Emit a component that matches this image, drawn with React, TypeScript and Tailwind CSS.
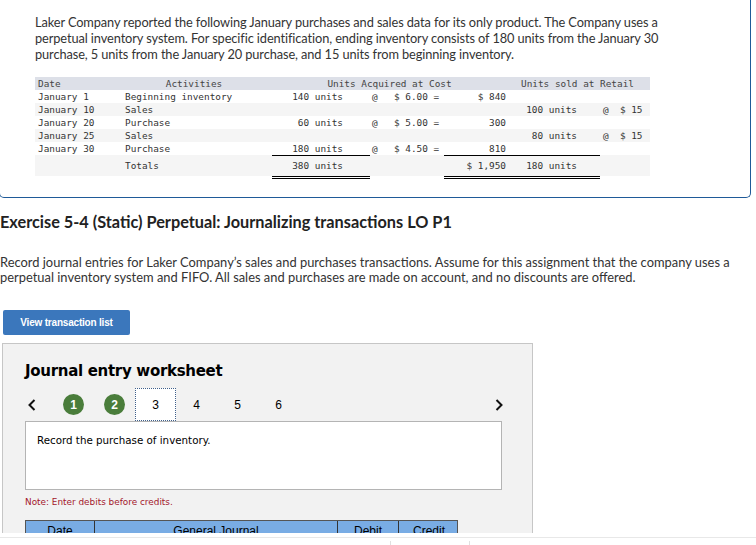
import React from "react";

// Purchases / sales data shown in the problem statement
type Row = {
  date: string;
  activity: string;
  qty?: string;
  price?: string;
  cost?: string;
  sold?: string;
  retail?: string;
  stripe?: boolean;
  underline?: boolean;
};

const rows: Row[] = [
  { date: "January 1", activity: "Beginning inventory", qty: "140 units", price: "$ 6.00 =", cost: "$ 840" },
  { date: "January 10", activity: "Sales", sold: "100 units", retail: "$ 15", stripe: true },
  { date: "January 20", activity: "Purchase", qty: "60 units", price: "$ 5.00 =", cost: "300" },
  { date: "January 25", activity: "Sales", sold: "80 units", retail: "$ 15", stripe: true },
  { date: "January 30", activity: "Purchase", qty: "180 units", price: "$ 4.50 =", cost: "810", underline: true },
];

const cols = "grid grid-cols-[90px_147px_98px_21px_53px_67px_89px_50px]";

function DataTable() {
  return (
    <div className="w-[615px] font-['DejaVu_Sans_Mono',monospace] text-[9.4px] text-[#333] leading-[13px]">
      <div className={`${cols} h-[13px] bg-[#dde0e8] text-[#444]`}>
        <div className="pl-[3px]">Date</div>
        <div className="text-center pr-[9px]">Activities</div>
        <div className="col-span-4 text-center pr-[4px]">Units Acquired at Cost</div>
        <div className="col-span-2 text-center pr-[6px]">Units sold at Retail</div>
      </div>
      {rows.map((r) => (
        <div key={r.date} className={`${cols} h-[13px] ${r.stripe ? "bg-[#f5f5f5]" : "bg-white"}`}>
          <div className="pl-[3px] whitespace-pre">{r.date}</div>
          <div className="whitespace-pre">{r.activity}</div>
          <div className={`text-right pr-[27px] ${r.underline ? "border-b border-black" : ""}`}>{r.qty}</div>
          <div className="pl-[2px]">{r.qty ? "@" : ""}</div>
          <div className="pl-[3px] whitespace-pre">{r.price}</div>
          <div className={`text-right pr-[5px] ${r.underline ? "border-b border-black" : ""}`}>{r.cost}</div>
          <div className={`text-right pr-[23px] ${r.underline ? "border-b border-black" : ""}`}>{r.sold}</div>
          <div className="pl-[3px] whitespace-pre">{r.retail ? `@  ${r.retail}` : ""}</div>
        </div>
      ))}
      <div className={`${cols} h-[21px] bg-[#f5f5f5] leading-[21px]`}>
        <div />
        <div>Totals</div>
        <div className="text-right pr-[27px] border-b-[3px] border-double border-black">380 units</div>
        <div />
        <div />
        <div className="text-right pr-[5px] border-b-[3px] border-double border-black whitespace-pre">$ 1,950</div>
        <div className="text-right pr-[23px] border-b-[3px] border-double border-black">180 units</div>
        <div />
      </div>
    </div>
  );
}

function Chevron({ dir }: { dir: "left" | "right" }) {
  return (
    <svg width="8" height="12" viewBox="0 0 8 12" className="block">
      <polyline
        points={dir === "left" ? "6.5,1 1.5,6 6.5,11" : "1.5,1 6.5,6 1.5,11"}
        fill="none"
        stroke="#111"
        strokeWidth="2"
      />
    </svg>
  );
}

function Worksheet() {
  const steps = [1, 2, 3, 4, 5, 6];
  return (
    <div className="ml-[2px] w-[531px] h-[200px] border border-[#c6c6c6] bg-[#f2f2f2] pl-[22px] pt-[17px] overflow-hidden">
      <h3 className="font-['DejaVu_Sans',sans-serif] font-bold text-[15px] leading-[20px] text-black tracking-[-0.3px]">
        Journal entry worksheet
      </h3>
      <div className="mt-[7px] flex items-center h-[33px] w-[480px]">
        <div className="w-[28px] pl-[3px]">
          <Chevron dir="left" />
        </div>
        {steps.map((s) =>
          s < 3 ? (
            <div key={s} className="w-[41px] flex justify-center">
              <span className="w-[21px] h-[21px] rounded-full bg-[#4a7d3b] text-white font-['Liberation_Sans',sans-serif] font-bold text-[12px] flex items-center justify-center">
                {s}
              </span>
            </div>
          ) : s === 3 ? (
            <div
              key={s}
              className="w-[41px] h-[33px] bg-white border border-dotted border-[#3f5f8a] flex items-center justify-center font-['Liberation_Sans',sans-serif] text-[12px] text-black"
            >
              {s}
            </div>
          ) : (
            <div key={s} className="w-[41px] text-center font-['Liberation_Sans',sans-serif] text-[12px] text-black">
              {s}
            </div>
          )
        )}
        <div className="ml-auto pr-[2px]">
          <Chevron dir="right" />
        </div>
      </div>
      <div className="w-[477px] h-[69px] bg-white border border-[#b4b4b4] pl-[11px] pt-[12px] font-['DejaVu_Sans',sans-serif] text-[10.3px] leading-[13px] text-black">
        Record the purchase of inventory.
      </div>
      <p className="mt-[6px] font-['DejaVu_Sans',sans-serif] text-[8.9px] leading-[12px] text-[#a3172c]">
        Note: Enter debits before credits.
      </p>
      <div className="mt-[12px] w-[433px] grid grid-cols-[69px_243px_61px_60px] bg-[#79ace4] border border-[#555] font-['Liberation_Sans',sans-serif] text-[12px] leading-[20px] text-black text-center">
        <div className="border-r border-[#333]">Date</div>
        <div className="border-r border-[#333]">General Journal</div>
        <div className="border-r border-[#333]">Debit</div>
        <div>Credit</div>
      </div>
    </div>
  );
}

export default function App() {
  return (
    <div className="w-[756px] h-[545px] overflow-hidden bg-white flex flex-col">
      <div className="h-[533px] overflow-hidden">
        <div className="-ml-[1px] w-[752px] border-x border-b border-[#1f5a98] rounded-b-[5px] pl-[35px] pt-[14px] pb-[21px]">
          <p className="w-[648px] font-['Lato',sans-serif] text-[12.8px] leading-[16px] text-[#333] tracking-[-0.1px]">
            Laker Company reported the following January purchases and sales data for its only product. The Company uses a
            perpetual inventory system. For specific identification, ending inventory consists of 180 units from the January 30
            purchase, 5 units from the January 20 purchase, and 15 units from beginning inventory.
          </p>
          <div className="mt-[15px]">
            <DataTable />
          </div>
        </div>

        <h2 className="mt-[14px] font-['Lato',sans-serif] font-bold text-[16.3px] leading-[20px] text-[#222]">
          Exercise 5-4 (Static) Perpetual: Journalizing transactions LO P1
        </h2>
        <p className="mt-[23px] w-[745px] font-['Lato',sans-serif] text-[12.9px] leading-[15px] text-[#333]">
          Record journal entries for Laker Company’s sales and purchases transactions. Assume for this assignment that the company uses a
          perpetual inventory system and FIFO. All sales and purchases are made on account, and no discounts are offered.
        </p>
        <button className="mt-[25px] ml-[3px] w-[127px] h-[25px] rounded-[2px] bg-[#3b77bc] text-white font-['Liberation_Sans',sans-serif] font-bold text-[10px] tracking-[-0.2px]">
          View transaction list
        </button>
        <div className="mt-[8px]">
          <Worksheet />
        </div>
      </div>
      <div className="relative mt-[4px] flex-1 border-t border-[#e8e8e8]">
        <span className="absolute left-[390px] top-[3px] h-[5px] w-px bg-[#e0e0e0]" />
        <span className="absolute left-[469px] top-[3px] h-[5px] w-px bg-[#e0e0e0]" />
      </div>
    </div>
  );
}
